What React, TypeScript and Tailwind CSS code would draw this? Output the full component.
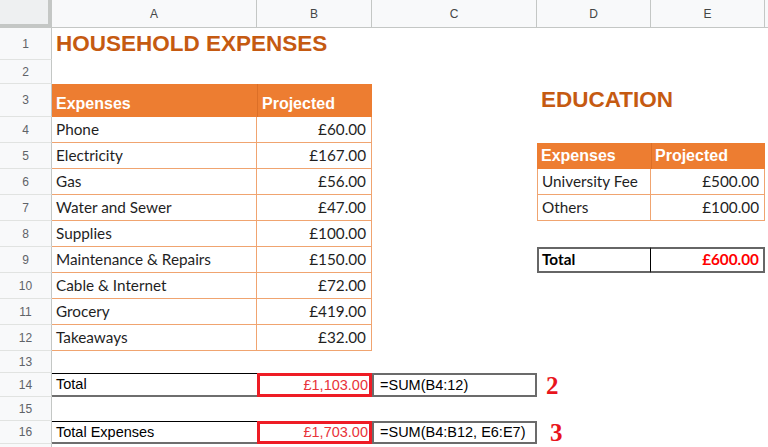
import React from 'react';

const cols = 'grid grid-cols-[52px_205px_115px_165px_114px_114px_1fr] grid-rows-[minmax(0,1fr)]';
const arial = "font-['Liberation_Sans',Arial,sans-serif]";
const calibri = "font-['Lato',Calibri,sans-serif]";

const expenses = [
    ['Phone', '£60.00'],
    ['Electricity', '£167.00'],
    ['Gas', '£56.00'],
    ['Water and Sewer', '£47.00'],
    ['Supplies', '£100.00'],
    ['Maintenance & Repairs', '£150.00'],
    ['Cable & Internet', '£72.00'],
    ['Grocery', '£419.00'],
    ['Takeaways', '£32.00'],
];

type RowProps = { n?: number; h: string; children?: React.ReactNode };

const Row = ({ n, h, children }: RowProps) => (
    <div className={`${cols} ${h}`}>
        <div className={`flex items-center justify-center border-r border-b border-r-[#c4c7c5] border-b-[#e1e3e1] bg-[#f8f9fa] text-[12px] leading-none text-[#5f6368] ${arial}`}>
            {n}
        </div>
        {children}
    </div>
);

const Empty = () => <div />;

// education block, columns D and E
const eduCells = (n: number) => {
    if (n === 5) {
        return (
            <>
                <div className={`flex items-center bg-[#ed7d31] pl-[4px] text-[16px] leading-none font-bold text-white ${arial}`}>Expenses</div>
                <div className={`flex items-center border-l border-[#dc6f27] bg-[#ed7d31] pl-[3px] text-[16px] leading-none font-bold text-white ${arial}`}>Projected</div>
            </>
        );
    }
    if (n === 6 || n === 7) {
        const [label, value] = n === 6 ? ['University Fee', '£500.00'] : ['Others', '£100.00'];
        return (
            <>
                <div className={`flex items-center border-x border-b border-[#f0a470] pl-[4px] text-[15.3px] leading-none text-[#1f1f1f] ${calibri}`}>{label}</div>
                <div className={`flex items-center justify-end border-r border-b border-[#f0a470] pr-[5px] text-[15.3px] leading-none text-[#1f1f1f] ${calibri}`}>{value}</div>
            </>
        );
    }
    if (n === 9) {
        return (
            <>
                <div className={`flex items-center border-y-2 border-l-2 border-r border-[#666] border-r-black pl-[3px] text-[15.3px] leading-none font-bold text-black ${calibri}`}>Total</div>
                <div className={`flex items-center justify-end border-y-2 border-r-2 border-[#666] pr-[4px] text-[15.3px] leading-none font-bold text-[#f00] ${calibri}`}>£600.00</div>
            </>
        );
    }
    return (
        <>
            <Empty />
            <Empty />
        </>
    );
};

const App = () => {
    return (
        <div className="h-[447px] w-[768px] overflow-hidden bg-white">
            {/* Column headers */}
            <div className={`${cols} h-[28px]`}>
                <div className="border-r-4 border-b-4 border-[#c4c7c5] bg-[#eef0f1]" />
                {['A', 'B', 'C', 'D', 'E'].map((c) => (
                    <div key={c} className={`flex items-center justify-center border-r border-b border-[#c4c7c5] bg-[#f8f9fa] text-[12px] leading-none text-[#444746] ${arial}`}>
                        {c}
                    </div>
                ))}
                <div className="border-b border-[#c4c7c5] bg-[#f8f9fa]" />
            </div>

            <Row n={1} h="h-[32px]">
                <div className={`flex items-center whitespace-nowrap pl-[4px] text-[22.5px] leading-none font-bold text-[#c55a11] ${arial}`}>HOUSEHOLD EXPENSES</div>
            </Row>
            <Row n={2} h="h-[24px]" />
            <Row n={3} h="h-[33px]">
                <div className={`flex items-end bg-[#ed7d31] pb-[5px] pl-[4px] text-[16px] leading-none font-bold text-white ${arial}`}>Expenses</div>
                <div className={`flex items-end border-l border-[#dc6f27] bg-[#ed7d31] pb-[5px] pl-[4px] text-[16px] leading-none font-bold text-white ${arial}`}>Projected</div>
                <Empty />
                <div className={`flex items-center whitespace-nowrap pl-[4px] text-[22.5px] leading-none font-bold text-[#c55a11] ${arial}`}>EDUCATION</div>
            </Row>

            {expenses.map(([label, value], i) => (
                <Row key={label} n={i + 4} h="h-[26px]">
                    <div className={`flex items-center border-r border-b border-[#f0a470] pl-[4px] text-[15.3px] leading-none text-[#1f1f1f] ${calibri}`}>{label}</div>
                    <div className={`flex items-center justify-end border-r border-b border-[#f0a470] pr-[5px] text-[15.3px] leading-none text-[#1f1f1f] ${calibri}`}>{value}</div>
                    <Empty />
                    {eduCells(i + 4)}
                </Row>
            ))}

            <Row n={13} h="h-[22px]" />
            <Row n={14} h="h-[24px]">
                <div className={`flex items-center border-t border-b-2 border-t-black border-b-[#6e6e6e] pl-[4px] text-[14.5px] leading-none text-black ${arial}`}>Total</div>
                <div className={`flex items-center justify-end border-[3px] border-[#ee1c25] pr-[1px] text-[14.5px] leading-none text-[#e8333a] ${arial}`}>£1,103.00</div>
                <div className={`flex items-center border-2 border-[#6b6b6b] pl-[6px] text-[14.5px] leading-none text-black ${arial}`}>=SUM(B4:12)</div>
                <div className="flex items-center pl-[9px] font-['Liberation_Serif',serif] text-[25px] leading-none font-bold text-[#e8141c]">2</div>
            </Row>
            <Row n={15} h="h-[24px]" />
            <Row n={16} h="h-[23px]">
                <div className={`flex items-center border-t border-b-2 border-t-black border-b-[#6e6e6e] pl-[4px] text-[14.5px] leading-none text-black ${arial}`}>Total Expenses</div>
                <div className={`flex items-center justify-end border-[3px] border-[#ee1c25] pr-[1px] text-[14.5px] leading-none text-[#e8333a] ${arial}`}>£1,703.00</div>
                <div className={`flex items-center border-2 border-[#6b6b6b] pl-[6px] text-[14.5px] leading-none text-black ${arial}`}>=SUM(B4:B12, E6:E7)</div>
                <div className="flex items-center pl-[13px] font-['Liberation_Serif',serif] text-[25px] leading-none font-bold text-[#e8141c]">3</div>
            </Row>
            <Row h="h-[26px]" />
        </div>
    );
};

export default App;
